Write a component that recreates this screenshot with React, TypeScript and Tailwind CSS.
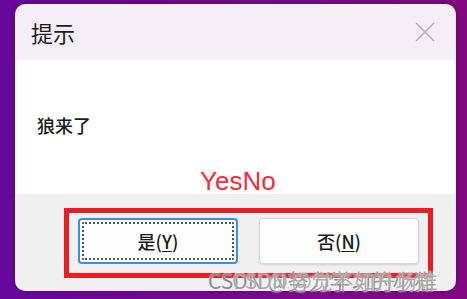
import React from 'react';

const cjk = { fontFamily: '"Noto Sans CJK SC", "Liberation Sans", sans-serif' };

function CloseIcon() {
  return (
    <svg width="22" height="22" viewBox="0 0 22 22" className="text-[#b4b0b8]">
      <path d="M2 2 L20 20 M20 2 L2 20" stroke="currentColor" strokeWidth="1.6" fill="none" />
    </svg>
  );
}

function DialogButton({ label, hotkey, focused }: { label: string; hotkey: string; focused?: boolean }) {
  return (
    <button
      className={`relative flex h-[46px] w-[160px] items-center justify-center rounded-[4px] bg-[#fdfdfd] text-[18px] text-[#1b1b1b] ${
        focused ? 'border-2 border-[#3d8ee0]' : 'border border-[#d6d6d6] shadow-[0_1px_2px_rgba(0,0,0,0.12)]'
      }`}
      style={cjk}
    >
      {focused && <span className="absolute inset-[2px] rounded-[2px] border-2 border-dotted border-[#555]" />}
      <span className="font-medium">{label}</span>
      <span className="font-medium">
        (<span className="underline underline-offset-2">{hotkey}</span>)
      </span>
    </button>
  );
}

export default function App() {
  return (
    <div className="relative h-[299px] w-[467px] overflow-hidden bg-[linear-gradient(90deg,#66089a,#7a0a8c_60%,#82087f)] pl-[15px] pt-[4px]">
      <div className="relative flex h-[287px] w-[441px] flex-col overflow-hidden rounded-[10px] shadow-[0_0_4px_rgba(0,0,0,0.35)]">
        {/* title bar */}
        <div className="flex h-[56px] items-center justify-between bg-[#f6eef7] pl-[16px] pr-[20px]">
          <span className="text-[22px] text-[#1c1c1c]" style={cjk}>提示</span>
          <CloseIcon />
        </div>

        {/* body */}
        <div className="h-[134px] bg-white pl-[22px] pt-[52px]">
          <span className="text-[18px] font-medium text-[#1c1c1c]" style={cjk}>狼来了</span>
        </div>

        {/* footer */}
        <div className="flex-1 bg-[#f0f0f0] pl-[49px] pt-[14px]">
          <div className="flex w-[369px] items-center gap-[21px] border-[5px] border-[#ec1c24] pb-[9px] pl-[9px] pt-[5px]">
            <DialogButton label="是" hotkey="Y" focused />
            <DialogButton label="否" hotkey="N" />
          </div>
        </div>

        {/* annotation */}
        <span
          className="absolute left-[185px] top-[164px] text-[26px] leading-none text-[#f52a3a]"
          style={{ fontFamily: '"Liberation Sans", sans-serif' }}
        >
          YesNo
        </span>
      </div>

      {/* watermark */}
      <div className="pointer-events-none absolute left-[208px] top-[270px] whitespace-nowrap text-[21px] leading-none text-[#8a8a8a] [text-shadow:0_0_2px_#fff]" style={cjk}>
        CSDN @努力学习的小猫
      </div>
      <div className="pointer-events-none absolute left-[232px] top-[270px] whitespace-nowrap text-[21px] leading-none text-[#8a8a8a]/70 [text-shadow:0_0_2px_#fff]" style={cjk}>
        CSDN @觉不如升场雉
      </div>
    </div>
  );
}
